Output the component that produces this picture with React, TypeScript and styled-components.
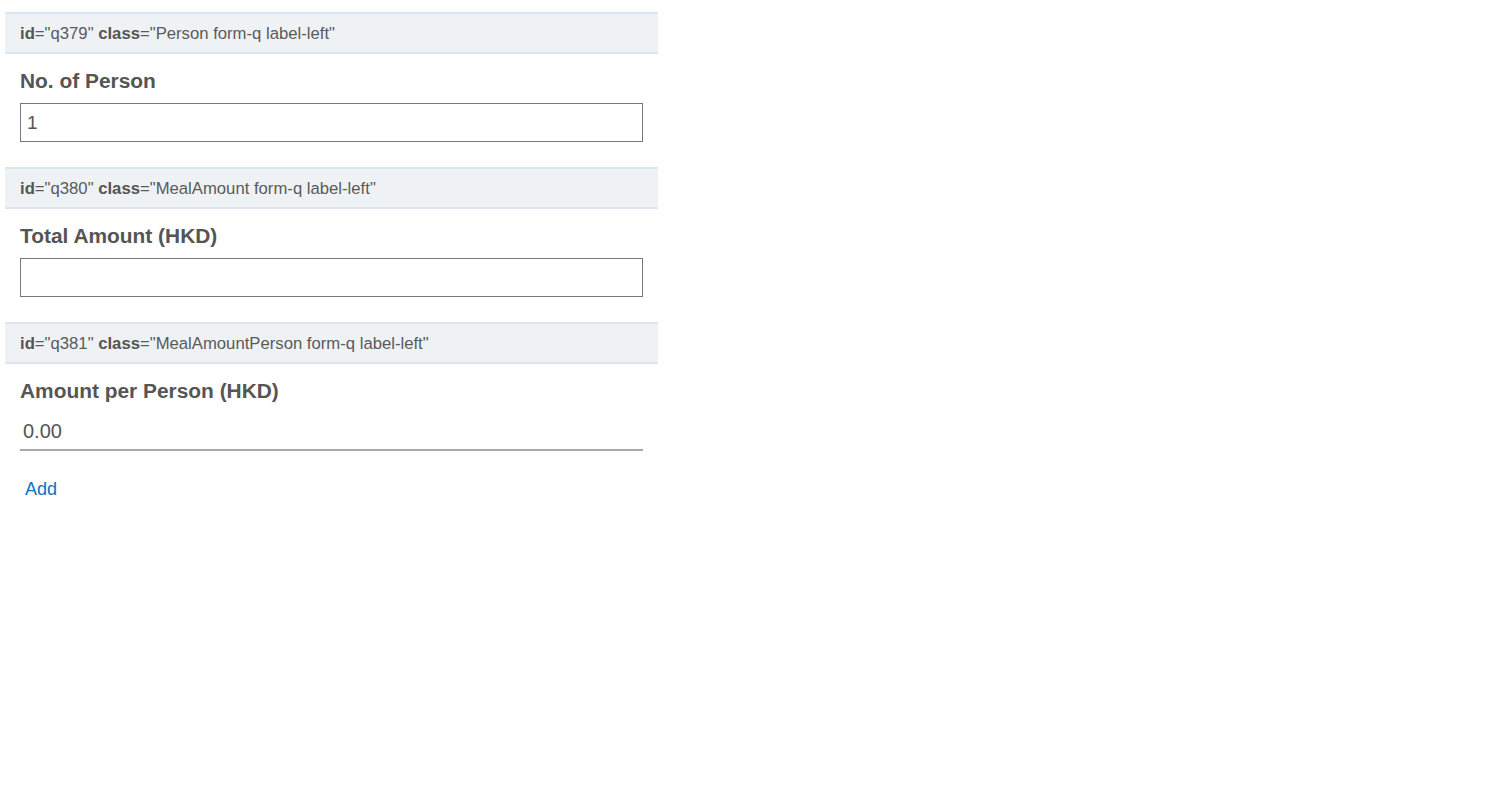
import React from 'react'
import styled, { createGlobalStyle } from 'styled-components'

const GlobalStyle = createGlobalStyle`
  body {
    margin: 0;
    background: #fff;
    font-family: 'Liberation Sans', Arial, sans-serif;
    color: #555;
  }
`

interface QuestionProps {
  id: string
  className: string
  label: string
  value?: string
  readOnly?: boolean
}

const Question: React.FC<QuestionProps> = ({ id, className, label, value = '', readOnly }) => (
  <StyledQuestion>
    <StyledMeta>
      <b>id</b>="{id}" <b>class</b>="{className}"
    </StyledMeta>
    <StyledBody $readOnly={readOnly}>
      <StyledLabel>{label}</StyledLabel>
      {readOnly ? (
        <StyledCalc>{value}</StyledCalc>
      ) : (
        <StyledInput type="text" defaultValue={value} />
      )}
    </StyledBody>
  </StyledQuestion>
)

const App: React.FC = () => (
  <StyledPage>
    <GlobalStyle />
    <Question id="q379" className="Person form-q label-left" label="No. of Person" value="1" />
    <Question id="q380" className="MealAmount form-q label-left" label="Total Amount (HKD)" />
    <Question
      id="q381"
      className="MealAmountPerson form-q label-left"
      label="Amount per Person (HKD)"
      value="0.00"
      readOnly
    />
    <StyledAdd href="#">Add</StyledAdd>
  </StyledPage>
)

const StyledPage = styled.div`
  width: 653px;
  padding: 12px 0 0 5px;
  display: flex;
  flex-direction: column;
`

const StyledQuestion = styled.div`
  display: flex;
  flex-direction: column;
`

const StyledMeta = styled.div`
  height: 38px;
  line-height: 39px;
  padding-left: 15px;
  background: #eef2f5;
  border-top: 2px solid #dce7f2;
  border-bottom: 2px solid #dce7f2;
  font-size: 16.7px;
  color: #5a5a5a;

  b {
    color: #555;
  }
`

const StyledBody = styled.div<{ $readOnly?: boolean }>`
  display: flex;
  flex-direction: column;
  padding: 14px 15px ${({ $readOnly }) => ($readOnly ? '0' : '25px')};
`

const StyledLabel = styled.label`
  font-size: 20.9px;
  font-weight: 700;
  line-height: 26px;
  color: #555;
`

const StyledInput = styled.input`
  box-sizing: border-box;
  margin-top: 9px;
  width: 623px;
  height: 39px;
  border: 1px solid #777;
  padding: 0 6px;
  font-family: 'Liberation Sans', Arial, sans-serif;
  font-size: 19px;
  color: #555;
  outline: none;
`

const StyledCalc = styled.div`
  box-sizing: border-box;
  margin-top: 9px;
  width: 623px;
  height: 38px;
  padding: 1px 3px 0;
  line-height: 34px;
  font-size: 20px;
  color: #555;
  border-bottom: 2px solid #a9a9a9;
`

const StyledAdd = styled.a`
  align-self: flex-start;
  margin: 27px 0 0 20px;
  font-size: 18px;
  line-height: 22px;
  color: #0a72c4;
  text-decoration: none;
`

export default App
